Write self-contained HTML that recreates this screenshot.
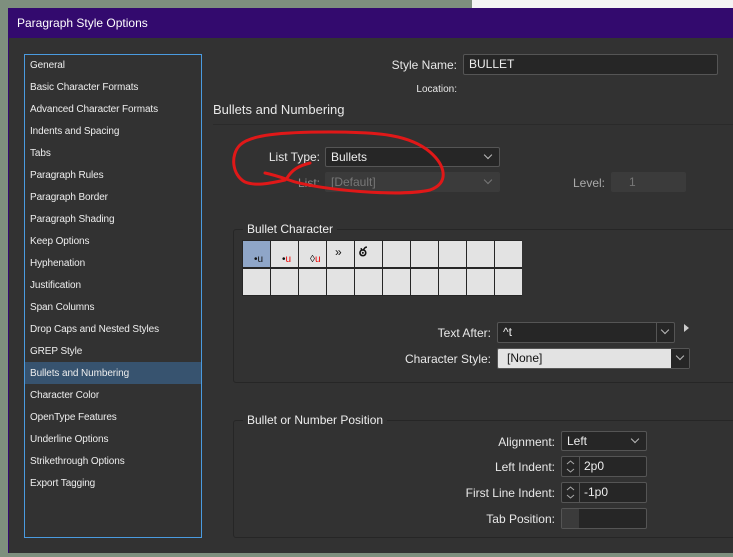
<!DOCTYPE html>
<html><head><style>
*{margin:0;padding:0;box-sizing:border-box}
body{width:733px;height:557px;background:#7e8f7e;position:relative;overflow:hidden;font-family:"Liberation Sans",sans-serif;color:#e8e8e8}
.a{position:absolute}
.lbl{position:absolute;font-size:12px;text-align:right;white-space:nowrap}
.li{position:absolute;left:5px;font-size:10px;color:#eee;white-space:nowrap;letter-spacing:-0.1px}
.box{position:absolute;background:#262626;border:1px solid #555;border-radius:2px;font-size:12px;padding:2px 5px;color:#eee}
.chev{position:absolute;width:6px;height:6px;border-right:1px solid #bbb;border-bottom:1px solid #bbb;transform:rotate(45deg)}
.cell{position:absolute;width:27px;height:26px;background:#e3e3e3}
.grp{position:absolute;border:1px solid #262626;border-radius:3px}
.gt{position:absolute;background:#323232;padding:0 4px;font-size:12px;color:#eee}
.spin{position:absolute;background:#262626;border:1px solid #555;border-radius:2px;font-size:12px;color:#eee}
</style></head><body>
<div class="a" style="left:472px;top:0;width:261px;height:8px;background:#f4f4f4"></div>
<div class="a" style="left:8px;top:8px;width:725px;height:545px;background:#323232;border-left:1px solid #330a6e"></div>
<div class="a" style="left:8px;top:8px;width:725px;height:30px;background:#330a6e"></div>
<div class="a" style="left:17px;top:16px;font-size:12px;color:#fff">Paragraph Style Options</div>

<div class="a" style="left:24px;top:54px;width:178px;height:484px;border:1px solid #4a9be0;background:#323232">
<div class="a" style="left:0;top:307px;width:176px;height:22px;background:#37536f"></div>
<div class="li" style="top:5px">General</div>
<div class="li" style="top:27px">Basic Character Formats</div>
<div class="li" style="top:49px">Advanced Character Formats</div>
<div class="li" style="top:71px">Indents and Spacing</div>
<div class="li" style="top:93px">Tabs</div>
<div class="li" style="top:115px">Paragraph Rules</div>
<div class="li" style="top:137px">Paragraph Border</div>
<div class="li" style="top:159px">Paragraph Shading</div>
<div class="li" style="top:181px">Keep Options</div>
<div class="li" style="top:203px">Hyphenation</div>
<div class="li" style="top:225px">Justification</div>
<div class="li" style="top:247px">Span Columns</div>
<div class="li" style="top:269px">Drop Caps and Nested Styles</div>
<div class="li" style="top:291px">GREP Style</div>
<div class="li" style="top:313px">Bullets and Numbering</div>
<div class="li" style="top:335px">Character Color</div>
<div class="li" style="top:357px">OpenType Features</div>
<div class="li" style="top:379px">Underline Options</div>
<div class="li" style="top:401px">Strikethrough Options</div>
<div class="li" style="top:423px">Export Tagging</div>
</div>

<div class="lbl" style="right:276px;top:58px">Style Name:</div>
<div class="box" style="left:463px;top:54px;width:255px;height:21px">BULLET</div>
<div class="lbl" style="right:276px;top:84px;font-size:10px">Location:</div>
<div class="a" style="left:213px;top:102px;font-size:13px">Bullets and Numbering</div>
<div class="a" style="left:213px;top:124px;width:520px;height:1px;background:#2a2a2a"></div>

<div class="lbl" style="right:413px;top:150px">List Type:</div>
<div class="box" style="left:325px;top:147px;width:175px;height:20px">Bullets</div>
<div class="chev" style="left:485px;top:152px"></div>
<div class="lbl" style="right:413px;top:176px;color:#888">List:</div>
<div class="box" style="left:325px;top:172px;width:175px;height:20px;background:#3b3b3b;border-color:#3b3b3b;color:#777">[Default]</div>
<div class="chev" style="left:485px;top:177px;border-color:#777"></div>
<div class="lbl" style="right:128px;top:176px;color:#aaa">Level:</div>
<div class="spin" style="left:611px;top:172px;width:75px;height:20px;background:#3b3b3b;border-color:#3b3b3b;color:#777"><span class="a" style="left:17px;top:2px">1</span></div>

<div class="grp" style="left:233px;top:229px;width:510px;height:154px"></div>
<div class="gt" style="left:243px;top:222px">Bullet Character</div>
<div class="a" style="left:242px;top:240px;width:280px;height:56px;background:#262626"></div>
<div class="cell" style="left:243px;top:241px;background:#8fa6c8"></div>
<div class="cell" style="left:271px;top:241px"></div><div class="cell" style="left:299px;top:241px"></div><div class="cell" style="left:327px;top:241px"></div><div class="cell" style="left:355px;top:241px"></div><div class="cell" style="left:383px;top:241px"></div><div class="cell" style="left:411px;top:241px"></div><div class="cell" style="left:439px;top:241px"></div><div class="cell" style="left:467px;top:241px"></div><div class="cell" style="left:495px;top:241px"></div>
<div class="cell" style="left:243px;top:269px"></div><div class="cell" style="left:271px;top:269px"></div><div class="cell" style="left:299px;top:269px"></div><div class="cell" style="left:327px;top:269px"></div><div class="cell" style="left:355px;top:269px"></div><div class="cell" style="left:383px;top:269px"></div><div class="cell" style="left:411px;top:269px"></div><div class="cell" style="left:439px;top:269px"></div><div class="cell" style="left:467px;top:269px"></div><div class="cell" style="left:495px;top:269px"></div>
<div class="a" style="left:254px;top:254px;font-size:10px;color:#111">•u</div>
<div class="a" style="left:282px;top:254px;font-size:10px;color:#111">•<span style="color:#e00">u</span></div>
<div class="a" style="left:310px;top:254px;font-size:10px;color:#111">◊<span style="color:#e00">u</span></div>
<div class="a" style="left:335px;top:245px;font-size:12px;color:#111">»</div>
<div class="a" style="left:359px;top:244px;font-size:13px;color:#111;font-weight:bold">ఠ</div>

<div class="lbl" style="right:242px;top:326px">Text After:</div>
<div class="box" style="left:497px;top:322px;width:178px;height:21px">^t</div>
<div class="a" style="left:656px;top:323px;width:1px;height:19px;background:#555"></div>
<div class="chev" style="left:662px;top:327px"></div>
<div class="a" style="left:684px;top:324px;border-left:5px solid #ccc;border-top:4px solid transparent;border-bottom:4px solid transparent"></div>
<div class="lbl" style="right:242px;top:352px">Character Style:</div>
<div class="box" style="left:497px;top:348px;width:193px;height:21px;background:#e3e3e3;color:#111;padding-left:9px">[None]</div>
<div class="a" style="left:671px;top:349px;width:18px;height:19px;background:#262626"></div>
<div class="chev" style="left:677px;top:353px"></div>

<div class="grp" style="left:233px;top:420px;width:510px;height:118px"></div>
<div class="gt" style="left:243px;top:413px">Bullet or Number Position</div>
<div class="lbl" style="right:178px;top:435px">Alignment:</div>
<div class="box" style="left:561px;top:431px;width:86px;height:20px">Left</div>
<div class="chev" style="left:632px;top:436px"></div>
<div class="lbl" style="right:178px;top:460px">Left Indent:</div>
<div class="spin" style="left:561px;top:456px;width:86px;height:21px"><svg class="a" style="left:3px;top:2px" width="11" height="15"><path d="M2 5 L5.5 2 L9 5 M2 10 L5.5 13 L9 10" fill="none" stroke="#aaa" stroke-width="1"/></svg><span class="a" style="left:17px;top:0;width:1px;height:19px;background:#555"></span><span class="a" style="left:22px;top:2px">2p0</span></div>
<div class="lbl" style="right:178px;top:486px">First Line Indent:</div>
<div class="spin" style="left:561px;top:482px;width:86px;height:21px"><svg class="a" style="left:3px;top:2px" width="11" height="15"><path d="M2 5 L5.5 2 L9 5 M2 10 L5.5 13 L9 10" fill="none" stroke="#aaa" stroke-width="1"/></svg><span class="a" style="left:17px;top:0;width:1px;height:19px;background:#555"></span><span class="a" style="left:22px;top:2px">-1p0</span></div>
<div class="lbl" style="right:178px;top:512px">Tab Position:</div>
<div class="spin" style="left:561px;top:508px;width:86px;height:21px"><span class="a" style="left:0;top:0;width:17px;height:19px;background:#3b3b3b"></span></div>

<svg class="a" style="left:0;top:0" width="733" height="557">
<path d="M310 163 C298 166 292 170 287 178 M265 173 C275 175 283 178 292 181 C320 190 400 197 430 190 C450 183 445 165 430 152 C410 135 380 132 330 132 C280 132 250 135 240 145 C230 155 232 175 245 182 C255 186 268 184 285 180" fill="none" stroke="#e01818" stroke-width="3" stroke-linecap="round"/>
</svg>
</body></html>
